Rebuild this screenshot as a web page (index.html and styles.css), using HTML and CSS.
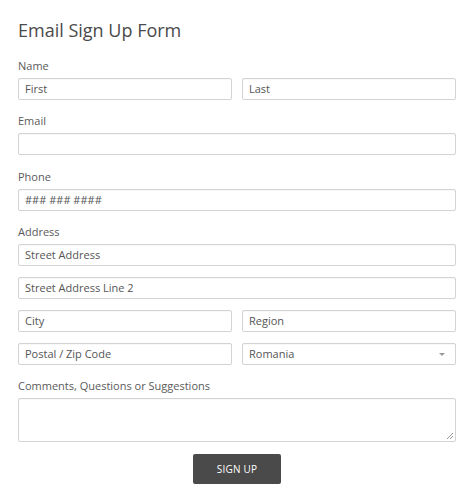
FILE: index.html
```html
<!DOCTYPE html>
<html lang="en">
<head>
<meta charset="utf-8">
<title>Email Sign Up Form</title>
<link rel="stylesheet" href="styles.css">
</head>
<body>
<form class="form">
  <h1 class="title">Email Sign Up Form</h1>

  <div class="field">
    <label class="label">Name</label>
    <div class="row">
      <div class="input">First</div>
      <div class="input">Last</div>
    </div>
  </div>

  <div class="field">
    <label class="label">Email</label>
    <div class="input"></div>
  </div>

  <div class="field">
    <label class="label">Phone</label>
    <div class="input">### ### ####</div>
  </div>

  <div class="field">
    <label class="label">Address</label>
    <div class="stack">
      <div class="input">Street Address</div>
      <div class="input">Street Address Line 2</div>
      <div class="row">
        <div class="input">City</div>
        <div class="input">Region</div>
      </div>
      <div class="row">
        <div class="input">Postal / Zip Code</div>
        <div class="input select">Romania<span class="caret"></span></div>
      </div>
    </div>
  </div>

  <div class="field field-last">
    <label class="label">Comments, Questions or Suggestions</label>
    <div class="input textarea">
      <svg class="grip" width="8" height="8" viewBox="0 0 8 8"><path d="M7 1L1 7M7 4L4 7" stroke="#999" stroke-width="1" fill="none"/></svg>
    </div>
  </div>

  <div class="actions">
    <button type="button" class="btn">SIGN UP</button>
  </div>
</form>
</body>
</html>
```

FILE: styles.css
```css
* { box-sizing: border-box; }
html, body { margin: 0; padding: 0; background: #fff; }
body {
  font-family: "Open Sans", "Liberation Sans", sans-serif;
  color: #555;
}
.form {
  padding: 18px 18px 0 18px;
  display: flex;
  flex-direction: column;
}
.title {
  margin: 0 0 16px 0;
  font-size: 18px;
  line-height: 24px;
  font-weight: 400;
  color: #4a4a4a;
}
.field {
  display: flex;
  flex-direction: column;
  gap: 5px;
  margin-bottom: 13.3px;
}
.field-last {
  margin-bottom: 12px;
}
.label {
  font-size: 11px;
  line-height: 15px;
  color: #5a5a5a;
}
.row {
  display: grid;
  grid-template-columns: 1fr 1fr;
  gap: 10px;
}
.stack {
  display: flex;
  flex-direction: column;
  gap: 11px;
}
.input {
  height: 22px;
  border: 1px solid #d3d3d3;
  border-radius: 2px;
  padding: 0 6px;
  font-size: 11px;
  line-height: 20px;
  color: #555;
  background: #fff;
  box-shadow: inset 0 1px 1px rgba(0,0,0,0.03);
}
.select {
  position: relative;
}
.caret {
  position: absolute;
  right: 10px;
  top: 9px;
  width: 0;
  height: 0;
  border-left: 3px solid transparent;
  border-right: 3px solid transparent;
  border-top: 3px solid #999;
}
.textarea {
  height: 44px;
  position: relative;
}
.grip {
  position: absolute;
  right: 1px;
  bottom: 1px;
}
.actions {
  display: flex;
  justify-content: center;
}
.btn {
  width: 88px;
  height: 30px;
  border: none;
  border-radius: 2px;
  background: #4a4a4a;
  color: #fff;
  font-family: "Open Sans", "Liberation Sans", sans-serif;
  font-size: 10px;
  letter-spacing: 0.2px;
  cursor: pointer;
}
```
